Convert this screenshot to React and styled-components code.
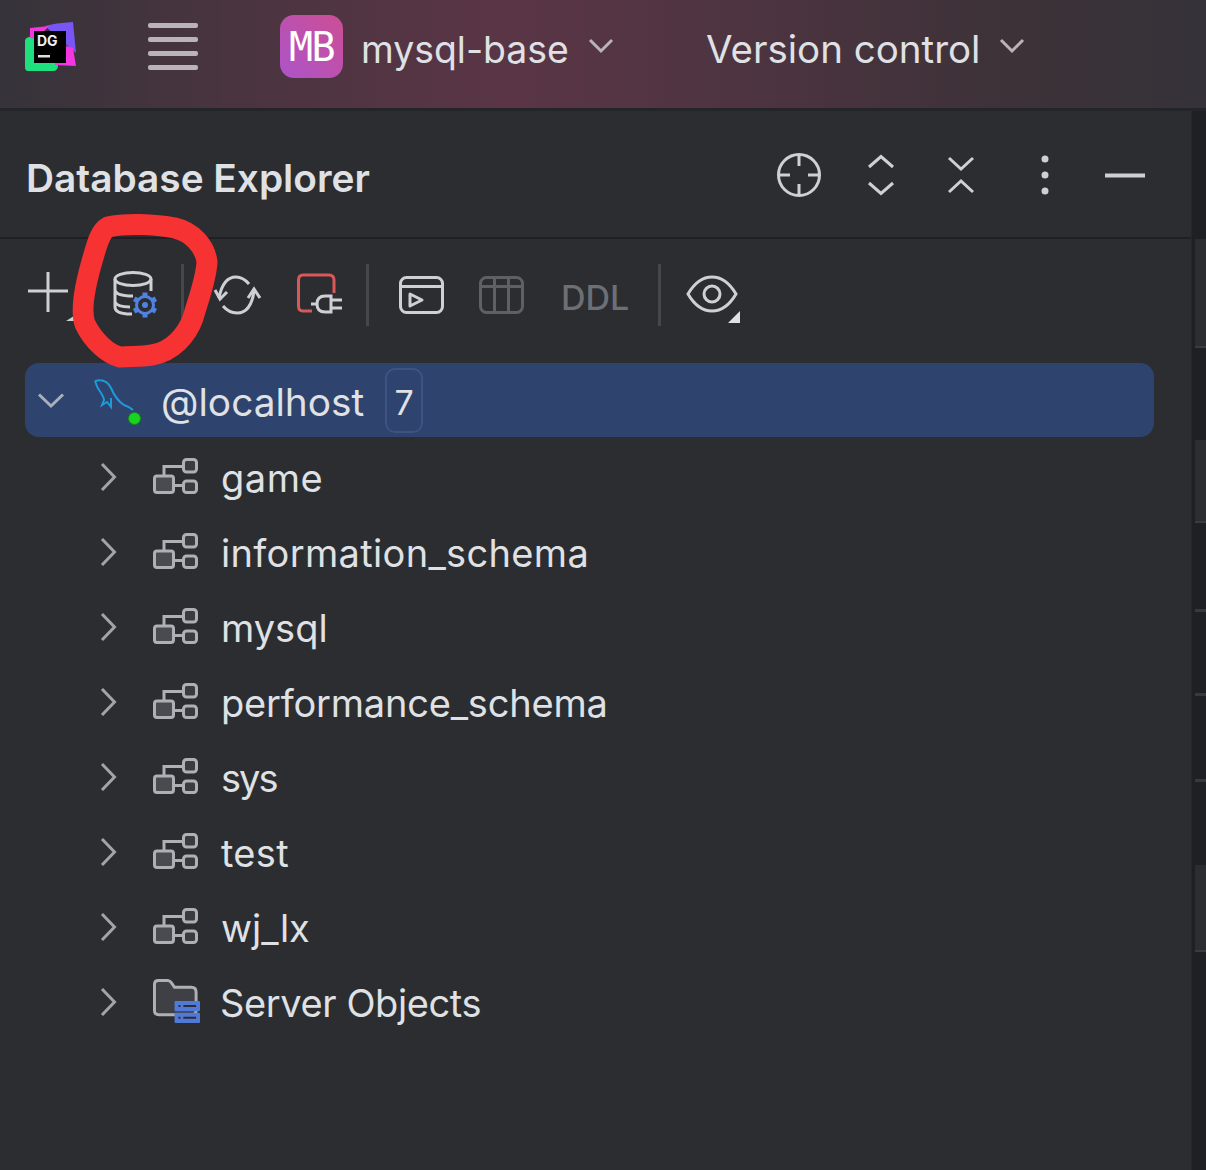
import React from "react";
import styled, { createGlobalStyle } from "styled-components";

const Global = createGlobalStyle`
  html, body { margin: 0; padding: 0; background: #1f2024; }
  #root { width: 1206px; height: 1170px; }
  * { box-sizing: border-box; }
`;

const Page = styled.div`
  position: relative;
  width: 1206px;
  height: 1170px;
  overflow: hidden;
  display: flex;
  flex-direction: column;
  font-family: Inter, "Noto Sans", sans-serif;
  background: #2b2d30;
`;

const TitleBar = styled.header`
  height: 111px;
  flex: none;
  display: flex;
  align-items: center;
  padding: 0 0 15px 25px;
  border-bottom: 3px solid #242529;
  background: linear-gradient(90deg, #36333a 0%, #4a343f 20%, #5a3546 42%, #4d3440 62%, #3c3238 85%, #36323a 100%);
`;

const Logo = styled.svg`
  width: 52px;
  height: 52px;
  flex: none;
`;

const Burger = styled.div`
  width: 50px;
  margin-left: 71px;
  height: 47px;
  display: flex;
  flex-direction: column;
  justify-content: space-between;
  flex: none;
`;

const BurgerLine = styled.span`
  display: block;
  height: 5px;
  border-radius: 2px;
  background: #bab3b7;
`;

const ProjectBadge = styled.div`
  width: 63px;
  height: 63px;
  margin-left: 82px;
  margin-right: 18px;
  border-radius: 14px;
  flex: none;
  display: flex;
  align-items: center;
  justify-content: center;
  color: #fff;
  font-family: "DejaVu Sans Mono", monospace;
  font-size: 40px;
  letter-spacing: -1.5px;
  background: linear-gradient(45deg, #ac54c9 0%, #cc4e95 100%);
`;

const Menu = styled.div`
  display: flex;
  align-items: center;
  color: #dfe1e5;
  font-size: ${(p) => p.$size}px;
  line-height: 1;
  margin-top: 6px;
  margin-right: ${(p) => p.$after}px;
  white-space: nowrap;
`;

const MenuChevron = styled.svg`
  width: 26px;
  height: 16px;
  margin-left: 19px;
  margin-top: -8px;
  flex: none;
`;

const Main = styled.div`
  flex: 1;
  display: flex;
  min-height: 0;
`;

const Panel = styled.section`
  width: 1192px;
  flex: none;
  display: flex;
  flex-direction: column;
  border-right: 1px solid #25262a;
`;

const PanelHeader = styled.div`
  height: 128px;
  flex: none;
  display: flex;
  align-items: center;
  justify-content: space-between;
  padding: 6px 46px 0 26px;
  border-bottom: 2px solid #1f2024;
`;

const PanelTitle = styled.h1`
  margin: 0;
  color: #dfe1e5;
  font-size: 38.8px;
  font-weight: 600;
  white-space: nowrap;
`;

const HeaderActions = styled.div`
  display: flex;
  align-items: center;
  margin-top: -4px;
`;

const HeaderIcon = styled.svg`
  display: block;
  flex: none;
  margin-left: ${(p) => p.$ml || 0}px;
`;

const Toolbar = styled.div`
  height: 112px;
  flex: none;
  display: flex;
  align-items: center;
  padding: 0 0 0 28px;
`;

const ToolIcon = styled.svg`
  display: block;
  flex: none;
  overflow: visible;
  margin-left: ${(p) => p.$ml || 0}px;
`;

const Separator = styled.span`
  display: block;
  width: 3px;
  height: 62px;
  flex: none;
  background: #45474c;
  margin-left: ${(p) => p.$ml || 0}px;
`;

const DdlLabel = styled.span`
  margin-left: 37px;
  width: 70px;
  flex: none;
  color: #6c6f75;
  font-size: 34px;
  font-weight: 500;
  line-height: 1;
  margin-top: 6px;
`;

const Tree = styled.div`
  padding: 12px 37px 0 25px;
`;

const SelectedRow = styled.div`
  height: 74px;
  margin-bottom: 1px;
  display: flex;
  align-items: center;
  padding-left: 12px;
  border-radius: 14px;
  background: #2e436e;
`;

const Row = styled.div`
  height: 75.14px;
  display: flex;
  align-items: center;
  padding-left: 75px;
`;

const RowIcon = styled.svg`
  display: block;
  flex: none;
  overflow: visible;
  margin-left: ${(p) => p.$ml || 0}px;
  margin-top: ${(p) => p.$mt || 0}px;
`;

const NodeName = styled.span`
  margin-left: ${(p) => p.$ml}px;
  color: #dfe1e5;
  font-size: ${(p) => p.$size || 38}px;
  letter-spacing: ${(p) => p.$track || 0}px;
  line-height: 1;
  white-space: nowrap;
  position: relative;
  top: 2px;
`;

const CountBadge = styled.span`
  margin-left: 21px;
  width: 38px;
  height: 65px;
  flex: none;
  display: flex;
  align-items: center;
  justify-content: center;
  border: 2px solid #3d5482;
  border-radius: 10px;
  color: #dfe1e5;
  font-size: 34px;
  padding-top: 4px;
`;

const Rail = styled.aside`
  flex: 1;
  background: #1f2024;
  padding: 128px 0 0 3px;
  display: flex;
  flex-direction: column;
`;

const RailSegment = styled.div`
  height: ${(p) => p.$h}px;
  flex: none;
  margin-bottom: ${(p) => p.$mb}px;
  background: #2b2d30;
  border-bottom: 2px solid #3a3c40;
`;

const RailTick = styled.div`
  height: 3px;
  flex: none;
  margin-bottom: ${(p) => p.$mb}px;
  background: #38393d;
`;

const Scribble = styled.svg`
  position: absolute;
  left: 0;
  top: 0;
  width: 1206px;
  height: 1170px;
  pointer-events: none;
`;

const GRAY = "#ced0d6";

const Chevron = ({ open }) =>
  open ? (
    <RowIcon width="28" height="16" viewBox="0 0 28 16">
      <path d="M2 2.5 L14 14 L26 2.5" fill="none" stroke="#a9afbd" strokeWidth="3" />
    </RowIcon>
  ) : (
    <RowIcon $mt={2} width="16" height="30" viewBox="0 0 16 30">
      <path d="M2 2 L14.5 15 L2 28" fill="none" stroke="#a2a4a9" strokeWidth="3" />
    </RowIcon>
  );

const SchemaIcon = () => (
  <RowIcon $ml={37} width="45" height="36" viewBox="0 0 45 36">
    <rect x="1.5" y="18" width="19" height="16.5" rx="2.5" fill="#4a4b50" stroke="#aeb0b5" strokeWidth="3" />
    <rect x="30.5" y="1.5" width="13" height="12.5" rx="3" fill="#3a3b40" stroke="#aeb0b5" strokeWidth="3" />
    <rect x="30.5" y="23" width="13" height="11.5" rx="3" fill="#3a3b40" stroke="#aeb0b5" strokeWidth="3" />
    <path d="M11 18 V8.5 H30.5 M21 27.5 H30.5" fill="none" stroke="#aeb0b5" strokeWidth="3" />
  </RowIcon>
);

const ServerIcon = () => (
  <RowIcon $ml={37} width="48" height="46" viewBox="0 0 49 46">
    <path d="M1.5 6 Q1.5 2 5.5 2 H15 Q17 2 18.5 4 L22 9 H39 Q44 9 44 14 V33 Q44 37 40 37 H6 Q1.5 37 1.5 33 Z" fill="#3f4045" stroke="#aeb0b5" strokeWidth="3" />
    <rect x="22" y="23" width="26" height="10.5" rx="1" fill="#5079d8" />
    <rect x="22" y="35" width="26" height="10.5" rx="1" fill="#5079d8" />
    <path d="M26 28.2 H28 M31 28.2 H44 M26 40.2 H28 M31 40.2 H44" stroke="#2b2d30" strokeWidth="2" />
  </RowIcon>
);

const schemas = [
  { name: "game", track: 0.5 },
  { name: "information_schema", track: 0.33 },
  { name: "mysql", track: 0 },
  { name: "performance_schema", track: -0.2 },
  { name: "sys", track: -2 },
  { name: "test", track: 0.3 },
  { name: "wj_lx", track: 0 },
];

const gearTeeth = [0, 60, 120, 180, 240, 300];

export default function App() {
  return (
    <Page>
      <Global />
      <TitleBar>
        <Logo viewBox="0 0 52 52">
          <path d="M4 16 Q14 13 27 17 L33 44 Q33 50 28 50 H3 Q0 50 0 46 L0 20 Q0 17 4 16 Z" fill="#1fe07f" />
          <path d="M20 5 Q30 2 48 1 L51 32 L30 14 Z" fill="#7a55f5" />
          <path d="M5 7 L24 5 L12 18 L5 17 Z" fill="#f236e0" />
          <path d="M41 25 L48 27 L51 45 L30 44 L30 30 Z" fill="#f236e0" />
          <rect x="9" y="10" width="32" height="32" fill="#000" />
          <text x="12" y="25" fill="#f0f0f0" fontFamily="Inter, sans-serif" fontWeight="700" fontSize="14">DG</text>
          <rect x="13" y="34" width="12" height="2.5" fill="#e0e0e0" />
        </Logo>
        <Burger>
          <BurgerLine />
          <BurgerLine />
          <BurgerLine />
          <BurgerLine />
        </Burger>
        <ProjectBadge>MB</ProjectBadge>
        <Menu $size={37.4} $after={92}>
          mysql-base
          <MenuChevron viewBox="0 0 26 16">
            <path d="M2 2 L13 13 L24 2" fill="none" stroke="#b9b4b8" strokeWidth="3" />
          </MenuChevron>
        </Menu>
        <Menu $size={38.5} $after={0}>
          Version control
          <MenuChevron viewBox="0 0 26 16">
            <path d="M2 2 L13 13 L24 2" fill="none" stroke="#b9b4b8" strokeWidth="3" />
          </MenuChevron>
        </Menu>
      </TitleBar>
      <Main>
        <Panel>
          <PanelHeader>
            <PanelTitle>Database Explorer</PanelTitle>
            <HeaderActions>
              <HeaderIcon width="46" height="46" viewBox="0 0 46 46">
                <circle cx="23" cy="23" r="20.5" fill="none" stroke={GRAY} strokeWidth="3" />
                <path d="M23 2.5 V14 M23 32 V43.5 M2.5 23 H14 M32 23 H43.5" stroke={GRAY} strokeWidth="3" />
              </HeaderIcon>
              <HeaderIcon $ml={45} width="28" height="42" viewBox="0 0 28 42">
                <path d="M2 13 L14 2.5 L26 13 M2 29 L14 39.5 L26 29" fill="none" stroke={GRAY} strokeWidth="3" />
              </HeaderIcon>
              <HeaderIcon $ml={52} width="28" height="38" viewBox="0 0 28 38">
                <path d="M2 2 L14 13 L26 2 M2 36 L14 25 L26 36" fill="none" stroke={GRAY} strokeWidth="3" />
              </HeaderIcon>
              <HeaderIcon $ml={66} width="8" height="40" viewBox="0 0 8 40">
                <circle cx="4" cy="4" r="3.5" fill={GRAY} />
                <circle cx="4" cy="20" r="3.5" fill={GRAY} />
                <circle cx="4" cy="36" r="3.5" fill={GRAY} />
              </HeaderIcon>
              <HeaderIcon $ml={56} width="40" height="5" viewBox="0 0 40 5">
                <rect width="40" height="4" y="0.5" fill={GRAY} />
              </HeaderIcon>
            </HeaderActions>
          </PanelHeader>
          <Toolbar>
            <ToolIcon width="46" height="52" viewBox="0 0 46 52">
              <path d="M20 3 V43 M0 22 H40" stroke={GRAY} strokeWidth="3" />
              <path d="M38 52 H46 V47 Z" fill={GRAY} />
            </ToolIcon>
            <ToolIcon $ml={39} width="46" height="48" viewBox="0 0 46 48">
              <ellipse cx="20" cy="8" rx="18" ry="6.5" fill="none" stroke={GRAY} strokeWidth="3" />
              <path d="M2 8 V36 Q2 42 14 43 H19 M2 19 Q3 25 20 25 M2 31 Q4 36 17 36 M38 8 V20" fill="none" stroke={GRAY} strokeWidth="3" />
              <circle cx="32" cy="34" r="13" fill="#2b2d30" />
              {gearTeeth.map((deg) => (
                <path key={deg} d="M32 25 V21.5" transform={`rotate(${deg} 32 34)`} stroke="#4f82e3" strokeWidth="5" />
              ))}
              <circle cx="32" cy="34" r="8.5" fill="#2b2d30" stroke="#4f82e3" strokeWidth="3" />
              <circle cx="32" cy="34" r="3" fill="#4f82e3" />
            </ToolIcon>
            <Separator $ml={22} />
            <ToolIcon $ml={31} width="46" height="40" viewBox="0 0 46 40">
              <path d="M4 23 Q8 2 21 2 Q28 2 34 9 M39 16 Q36 38 22 38 Q14 38 8 31" fill="none" stroke={GRAY} strokeWidth="3" />
              <path d="M33 23 L39 14 L45 23 M0 15 L5 24 L12 17" fill="none" stroke={GRAY} strokeWidth="3" />
            </ToolIcon>
            <ToolIcon $ml={36} width="46" height="44" viewBox="0 0 46 44">
              <path d="M15 38 H6 Q1.5 38 1.5 33 V7 Q1.5 2 6 2 H32 Q37 2 37 7 V20" fill="none" stroke="#d9595a" strokeWidth="3" />
              <path d="M20 31 Q20 23 28 23 H34 V39 H28 Q20 39 20 31 Z" fill="#2b2d30" stroke={GRAY} strokeWidth="3" />
              <path d="M34 27 H45 M34 35 H45 M14 31 H20" stroke={GRAY} strokeWidth="3" />
            </ToolIcon>
            <Separator $ml={23} />
            <ToolIcon $ml={30} width="45" height="38" viewBox="0 0 45 38">
              <rect x="1.5" y="1.5" width="42" height="35" rx="6" fill="none" stroke={GRAY} strokeWidth="3" />
              <path d="M1.5 10.5 H43.5" stroke={GRAY} strokeWidth="3" />
              <path d="M11 18 L23 24 L11 30 Z" fill="none" stroke={GRAY} strokeWidth="3" strokeLinejoin="round" />
            </ToolIcon>
            <ToolIcon $ml={35} width="45" height="38" viewBox="0 0 45 38">
              <rect x="1.5" y="1.5" width="42" height="35" rx="6" fill="none" stroke="#5e6064" strokeWidth="3" />
              <path d="M1.5 10.5 H43.5 M15.5 1.5 V36.5 M29.5 1.5 V36.5" stroke="#5e6064" strokeWidth="3" />
            </ToolIcon>
            <DdlLabel>DDL</DdlLabel>
            <Separator $ml={27} />
            <ToolIcon $ml={25} width="56" height="56" viewBox="0 0 56 56">
              <path d="M2 27 Q12 10 26 10 Q40 10 50 27 Q40 44 26 44 Q12 44 2 27 Z" fill="none" stroke={GRAY} strokeWidth="3" />
              <circle cx="26" cy="27" r="8" fill="none" stroke={GRAY} strokeWidth="3" />
              <path d="M54 44 V56 H42 Z" fill="#dfe1e5" />
            </ToolIcon>
          </Toolbar>
          <Tree>
            <SelectedRow>
              <Chevron open />
              <RowIcon $ml={29} width="46" height="46" viewBox="0 0 46 46">
                <path d="M1 4 Q12 1 17 11 Q22 23 30 28 Q36 30 39 33" fill="none" stroke="#1c9bd8" strokeWidth="2" />
                <path d="M1 4 Q3 11 7 16 Q10 21 10 23 L8 28 L13 25 L17 30 L17 21" fill="none" stroke="#1c9bd8" strokeWidth="2" />
                <circle cx="40.5" cy="41.5" r="6" fill="#19d31c" stroke="#158a24" strokeWidth="1" />
              </RowIcon>
              <NodeName $ml={21} $size={38.8}>@localhost</NodeName>
              <CountBadge>7</CountBadge>
            </SelectedRow>
            {schemas.map(({ name, track }) => (
              <Row key={name}>
                <Chevron />
                <SchemaIcon />
                <NodeName $ml={23} $track={track}>{name}</NodeName>
              </Row>
            ))}
            <Row>
              <Chevron />
              <ServerIcon />
              <NodeName $ml={19} $track={-0.4}>Server Objects</NodeName>
            </Row>
          </Tree>
        </Panel>
        <Rail>
          <RailSegment $h={109} $mb={92} />
          <RailSegment $h={83} $mb={86} />
          <RailTick $mb={81} />
          <RailTick $mb={83} />
          <RailTick $mb={83} />
          <RailSegment $h={87} $mb={0} />
        </Rail>
      </Main>
      <Scribble viewBox="0 0 1206 1170">
        <path
          d="M120 357 C108 354 94 342 85 324 C80 310 85 285 93 258 C98 240 101 231 108 227 C125 223 155 224 175 228 C192 232 205 246 207 262 C206 280 199 297 193 318 C187 335 172 352 152 355 C140 357 130 356 120 357 Z"
          fill="none"
          stroke="#f63232"
          strokeWidth="21"
          strokeLinejoin="round"
        />
      </Scribble>
    </Page>
  );
}
